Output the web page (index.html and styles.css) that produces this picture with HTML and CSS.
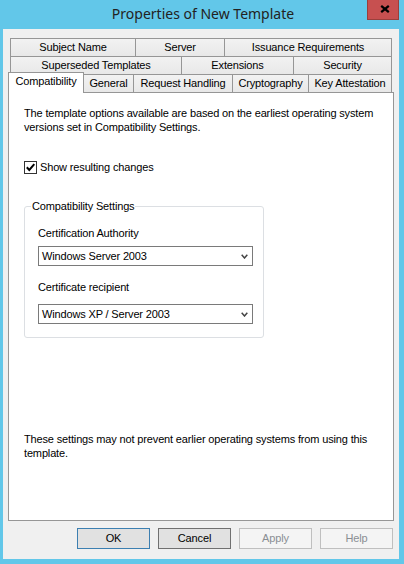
FILE: index.html
```html
<!DOCTYPE html>
<html>
<head>
<meta charset="utf-8">
<link rel="stylesheet" href="styles.css">
</head>
<body>
<div class="window">
  <div class="titlebar">
    <div class="title">Properties of New Template</div>
    <div class="close">
      <svg width="10" height="8" viewBox="0 0 10 8"><path d="M1.2 0.8 L8.8 7.2 M8.8 0.8 L1.2 7.2" stroke="#000" stroke-width="2.2" fill="none"/></svg>
    </div>
  </div>
  <div class="client">
    <div class="tabs">
      <div class="tabrow">
        <div class="tab w125">Subject Name</div>
        <div class="tab w89">Server</div>
        <div class="tab w168 last">Issuance Requirements</div>
      </div>
      <div class="tabrow">
        <div class="tab w171">Superseded Templates</div>
        <div class="tab w112">Extensions</div>
        <div class="tab w99 last">Security</div>
      </div>
      <div class="tabrow">
        <div class="tab selected">Compatibility</div>
        <div class="tab w49 noleft">General</div>
        <div class="tab w99">Request Handling</div>
        <div class="tab w76">Cryptography</div>
        <div class="tab w84 last">Key Attestation</div>
      </div>
    </div>
    <div class="panel">
      <p class="text">The template options available are based on the earliest operating system<br>versions set in Compatibility Settings.</p>
      <label class="check">
        <span class="box"><svg width="11" height="11" viewBox="0 0 11 11"><path d="M1.8 5.2 L4.3 7.9 L9.3 2.2" stroke="#000" stroke-width="2" fill="none"/></svg></span>
        <span>Show resulting changes</span>
      </label>
      <fieldset class="group">
        <legend>Compatibility Settings</legend>
        <div class="field-label">Certification Authority</div>
        <div class="combo">
          <span>Windows Server 2003</span>
          <svg width="7" height="5" viewBox="0 0 7 5"><polyline points="0.7,0.8 3.5,4 6.3,0.8" stroke="#444" stroke-width="1.5" fill="none"/></svg>
        </div>
        <div class="field-label second">Certificate recipient</div>
        <div class="combo third">
          <span>Windows XP / Server 2003</span>
          <svg width="7" height="5" viewBox="0 0 7 5"><polyline points="0.7,0.8 3.5,4 6.3,0.8" stroke="#444" stroke-width="1.5" fill="none"/></svg>
        </div>
      </fieldset>
      <p class="text bottom">These settings may not prevent earlier operating systems from using this<br>template.</p>
    </div>
    <div class="buttons">
      <div class="btn default">OK</div>
      <div class="btn">Cancel</div>
      <div class="btn disabled">Apply</div>
      <div class="btn disabled">Help</div>
    </div>
  </div>
</div>
</body>
</html>
```
FILE: styles.css
```css
html, body {
  margin: 0;
  padding: 0;
}
body {
  background: #62c7e9;
  width: 404px;
  height: 564px;
  overflow: hidden;
  font-family: "Liberation Sans", Arial, sans-serif;
  font-size: 11px;
  letter-spacing: -0.15px;
  color: #000;
}
.window {
  width: 404px;
  height: 564px;
}
.titlebar {
  height: 29px;
  display: grid;
  grid-template-columns: 1fr auto 1fr;
}
.title {
  grid-column: 2;
  font-family: "Noto Sans", "Open Sans", sans-serif;
  font-size: 14px;
  letter-spacing: 0;
  line-height: 28px;
  color: #222;
  padding-left: 2px;
}
.close {
  grid-column: 3;
  justify-self: end;
  align-self: start;
  margin-right: 5px;
  width: 32px;
  height: 20px;
  box-sizing: border-box;
  background: #c75050;
  border: 1px solid #9a3f3c;
  border-top: none;
  display: flex;
  align-items: center;
  justify-content: center;
  padding-left: 3px;
  padding-bottom: 1px;
}
.client {
  margin: 0 5px 5px 3px;
  height: 530px;
  box-sizing: border-box;
  background: #f0f0f0;
  padding-top: 9px;
  display: flex;
  flex-direction: column;
}
.tabs {
  margin-left: 5px;
  width: 386px;
}
.tabrow {
  display: flex;
  height: 18px;
  margin-left: 2px;
  align-items: flex-start;
}
.tab {
  box-sizing: border-box;
  height: 18px;
  border-top: 1px solid #969696;
  border-left: 1px solid #969696;
  background: linear-gradient(#f2f2f2, #e8e8e8);
  text-align: center;
  line-height: 17px;
  white-space: nowrap;
}
.tab.last { border-right: 1px solid #969696; }
.tab.noleft { border-left: none; }
.w125 { width: 125px; }
.w89 { width: 89px; }
.w168 { width: 168px; }
.w171 { width: 171px; }
.w112 { width: 112px; }
.w99 { width: 99px; }
.w49 { width: 49px; }
.w76 { width: 76px; }
.w84 { width: 84px; }
.tab.selected {
  width: 76px;
  height: 21px;
  margin-left: -2px;
  margin-top: -2px;
  background: #fff;
  border-right: 1px solid #969696;
  line-height: 17px;
  position: relative;
  z-index: 1;
}
.panel {
  margin-left: 5px;
  width: 386px;
  height: 429px;
  box-sizing: border-box;
  border: 1px solid #969696;
  background: #fff;
  padding: 13px 15px 60px 15px;
  display: flex;
  flex-direction: column;
  align-items: flex-start;
}
.text {
  margin: 0;
  line-height: 14px;
  white-space: nowrap;
}
.text.bottom {
  margin-top: auto;
}
.check {
  margin-top: 26px;
  height: 14px;
  display: flex;
  align-items: center;
  gap: 3px;
  line-height: 14px;
}
.box {
  width: 13px;
  height: 13px;
  box-sizing: border-box;
  border: 1px solid #333;
  background: #fff;
  display: flex;
  align-items: center;
  justify-content: center;
}
.group {
  margin: 25px 0 0 0;
  width: 240px;
  box-sizing: border-box;
  border: 1px solid #dcdfe3;
  border-radius: 3px;
  padding: 13px 10px 13px 13px;
  min-width: 0;
}
.group legend {
  margin-left: -7px;
  padding: 0 1px;
  line-height: 14px;
}
.field-label {
  line-height: 14px;
}
.field-label.second {
  margin-top: 14px;
}
.combo {
  margin-top: 6px;
  height: 20px;
  box-sizing: border-box;
  border: 1px solid #7a7a7a;
  background: #fff;
  display: flex;
  align-items: center;
  justify-content: space-between;
  padding: 0 4px 0 3px;
  line-height: 14px;
}
.combo.third {
  margin-top: 10px;
}
.buttons {
  margin-top: 7px;
  display: flex;
  justify-content: flex-end;
  gap: 8px;
  padding-right: 6px;
}
.btn {
  width: 73px;
  height: 21px;
  box-sizing: border-box;
  border: 1px solid #707070;
  background: #e1e1e1;
  text-align: center;
  line-height: 19px;
}
.btn.default {
  border-color: #3c7fb1;
}
.btn.disabled {
  border-color: #bfbfbf;
  background: #f4f4f4;
  color: #8a8e93;
}
```
